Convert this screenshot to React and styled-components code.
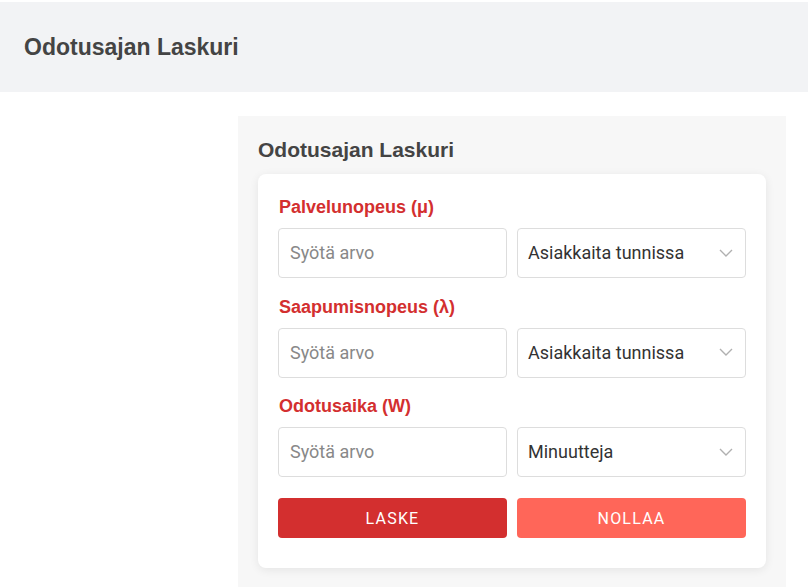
import React from "react";
import styled, { createGlobalStyle } from "styled-components";

const Global = createGlobalStyle`
  * { box-sizing: border-box; }
  html, body { margin: 0; padding: 0; background: #ffffff; }
  body { font-family: "Liberation Sans", Arial, sans-serif; }
`;

const Page = styled.div`
  padding-top: 2px;
`;

const Header = styled.header`
  height: 90px;
  background: #f2f3f5;
  display: flex;
  align-items: center;
  padding: 0 24px;
`;

const HeaderTitle = styled.h1`
  margin: 0;
  font-family: "Liberation Sans", Arial, sans-serif;
  font-weight: 700;
  font-size: 23px;
  color: #444444;
`;

const Main = styled.main`
  display: flex;
  padding: 24px 22px 0 20px;
  gap: 20px;
`;

const Sidebar = styled.aside`
  width: 198px;
  flex: none;
`;

const Panel = styled.section`
  flex: 1;
  background: #f7f7f7;
  padding: 22px 20px 20px;
  min-height: 480px;
`;

const PanelTitle = styled.h2`
  margin: 0 0 12px;
  font-family: "Liberation Sans", Arial, sans-serif;
  font-size: 21px;
  line-height: 24px;
  font-weight: 700;
  color: #444444;
`;

const Card = styled.div`
  background: #ffffff;
  border-radius: 8px;
  box-shadow: 0 2px 10px rgba(0, 0, 0, 0.08);
  padding: 23px 20px 30px;
`;

const Group = styled.div`
  margin-bottom: 18.5px;
`;

const Label = styled.label`
  display: block;
  margin: 0 0 10px 1px;
  font-family: "Liberation Sans", Arial, sans-serif;
  font-size: 18px;
  line-height: 21px;
  font-weight: 700;
  color: #d32f2f;
`;

const Row = styled.div`
  display: grid;
  grid-template-columns: 1fr 1fr;
  gap: 10px;
`;

const Input = styled.input`
  height: 50px;
  width: 100%;
  border: 1px solid #dddddd;
  border-radius: 4px;
  padding: 0 11px 1px;
  font-family: Roboto, sans-serif;
  font-size: 18px;
  color: #333333;
  background: #ffffff;
  outline: none;
  &::placeholder { color: #888888; }
`;

const SelectBox = styled.div`
  height: 50px;
  border: 1px solid #dddddd;
  border-radius: 4px;
  padding: 0 12px 1px 10px;
  display: flex;
  align-items: center;
  justify-content: space-between;
  font-family: Roboto, sans-serif;
  font-size: 18px;
  color: #333333;
  background: #ffffff;
`;

const Chevron = () => (
  <svg width="14" height="8" viewBox="0 0 14 8" fill="none">
    <path d="M1 1l6 6 6-6" stroke="#b0b0b0" strokeWidth="1.4" />
  </svg>
);

const Buttons = styled.div`
  display: grid;
  grid-template-columns: 1fr 1fr;
  gap: 10px;
  margin-top: 21px;
`;

const Button = styled.button`
  height: 40px;
  border: none;
  border-radius: 4px;
  background: ${(p) => (p.$light ? "#ff6659" : "#d32f2f")};
  color: #ffffff;
  font-family: Roboto, sans-serif;
  font-size: 16px;
  font-weight: 400;
  letter-spacing: 1.2px;
  text-transform: uppercase;
`;

const fields = [
  { label: "Palvelunopeus (μ)", unit: "Asiakkaita tunnissa" },
  { label: "Saapumisnopeus (λ)", unit: "Asiakkaita tunnissa" },
  { label: "Odotusaika (W)", unit: "Minuutteja" },
];

export default function App() {
  return (
    <Page>
      <Global />
      <Header>
        <HeaderTitle>Odotusajan Laskuri</HeaderTitle>
      </Header>
      <Main>
        <Sidebar />
        <Panel>
          <PanelTitle>Odotusajan Laskuri</PanelTitle>
          <Card>
            {fields.map((f) => (
              <Group key={f.label}>
                <Label>{f.label}</Label>
                <Row>
                  <Input placeholder="Syötä arvo" />
                  <SelectBox>
                    <span>{f.unit}</span>
                    <Chevron />
                  </SelectBox>
                </Row>
              </Group>
            ))}
            <Buttons>
              <Button>Laske</Button>
              <Button $light>Nollaa</Button>
            </Buttons>
          </Card>
        </Panel>
      </Main>
    </Page>
  );
}
